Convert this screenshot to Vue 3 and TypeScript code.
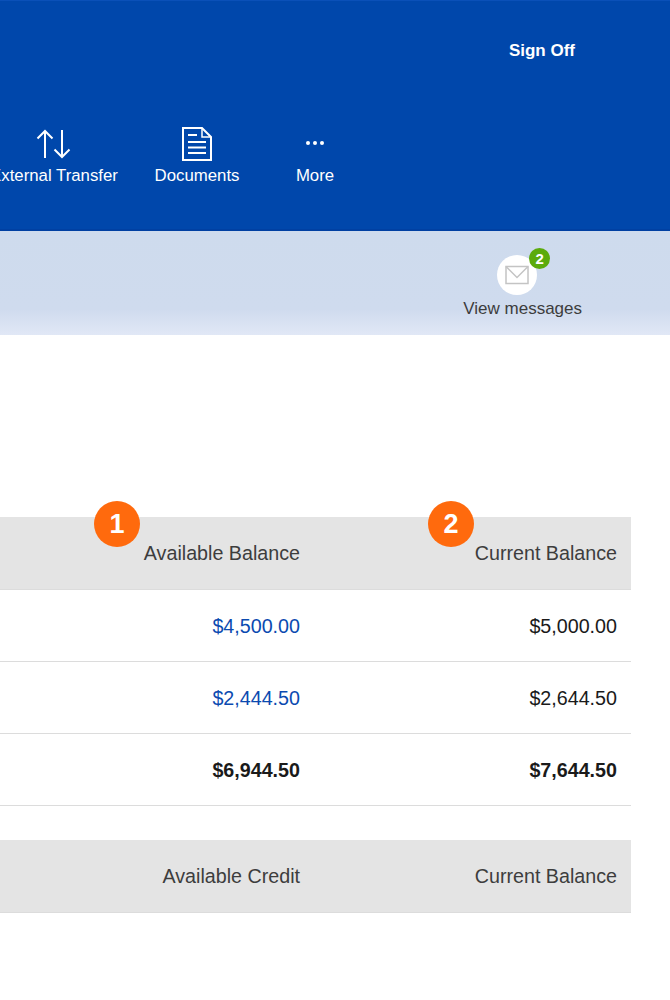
<script setup lang="ts">
interface Row { avail: string; current: string; kind: 'link' | 'total' }
const rows: Row[] = [
  { avail: '$4,500.00', current: '$5,000.00', kind: 'link' },
  { avail: '$2,444.50', current: '$2,644.50', kind: 'link' },
  { avail: '$6,944.50', current: '$7,644.50', kind: 'total' },
]
</script>

<template>
  <div class="page">
    <header class="top">
      <div class="signoff-row"><a class="signoff">Sign Off</a></div>
      <nav class="nav">
        <div class="nav-item wide">
          <svg class="nav-icon" width="36" height="36" viewBox="0 0 36 36" fill="none" stroke="#fff" stroke-width="2">
            <path d="M9 33V6M1.500 13.500L9 6l7.500 7.500" />
            <path d="M26 5v27M18.500 24.500L26 32l7.500-7.500" />
          </svg>
          <span>External Transfer</span>
        </div>
        <div class="nav-item">
          <svg class="nav-icon" width="32" height="36" viewBox="0 0 32 36" fill="none" stroke="#fff" stroke-width="2">
            <path d="M2 3h19l9 9v23H2z" />
            <path d="M21 4v8h8" stroke-width="1.500" />
            <path d="M7 10h9M7 17h18M7 22.500h18M7 28h18" />
          </svg>
          <span>Documents</span>
        </div>
        <div class="nav-item">
          <svg class="nav-icon" width="32" height="36" viewBox="0 0 32 36" fill="#fff">
            <circle cx="9" cy="18" r="2" /><circle cx="16" cy="18" r="2" /><circle cx="23" cy="18" r="2" />
          </svg>
          <span>More</span>
        </div>
      </nav>
    </header>

    <section class="band">
      <div class="messages">
        <div class="msg-circle">
          <svg width="24" height="20" viewBox="0 0 24 20" fill="none" stroke="#c4c4c4" stroke-width="1.500">
            <rect x="1" y="1.500" width="22" height="17" />
            <path d="M1 1.500l11 11 11-11" />
          </svg>
          <span class="msg-badge">2</span>
        </div>
        <span class="msg-label">View messages</span>
      </div>
    </section>

    <main class="content">
      <div class="row head">
        <div class="cell">
          <span class="marker first">1</span>
          Available Balance
        </div>
        <div class="cell">
          <span class="marker second">2</span>
          Current Balance
        </div>
      </div>
      <div v-for="r in rows" :key="r.avail" class="row" :class="r.kind">
        <div class="cell avail">{{ r.avail }}</div>
        <div class="cell">{{ r.current }}</div>
      </div>
      <div class="row head second-table">
        <div class="cell">Available Credit</div>
        <div class="cell">Current Balance</div>
      </div>
    </main>
  </div>
</template>

<style>
html, body { margin: 0; background: #fff; overflow: hidden; }
</style>

<style scoped>
.page {
  width: 670px;
  height: 1000px;
  overflow: hidden;
  font-family: "Liberation Sans", Arial, sans-serif;
  background: #fff;
}
.top {
  height: 231px;
  box-sizing: border-box;
  background: #0047ab;
  border-top: 1px solid #0a50b8;
  border-bottom: 2px solid #0040a2;
  display: flex;
  flex-direction: column;
  color: #fff;
}
.signoff-row {
  display: flex;
  justify-content: flex-end;
  padding: 41px 95px 0 0;
}
.signoff {
  font-size: 17px;
  line-height: 18px;
  font-weight: 700;
}
.nav {
  display: flex;
  justify-content: flex-end;
  padding: 0 296px 0 0;
  margin-top: 65px;
}
.nav-item {
  width: 118px;
  flex: none;
  display: flex;
  flex-direction: column;
  align-items: center;
  font-size: 16.800px;
  line-height: 18px;
  white-space: nowrap;
}
.nav-item.wide { width: 168px; }
.nav-icon { height: 36px; margin-bottom: 6px; }
.band {
  height: 104px;
  box-sizing: border-box;
  background: linear-gradient(to bottom, #cedbed 0%, #cfdbee 75%, #e1e8f6 100%);
  display: flex;
  justify-content: flex-end;
  padding: 24px 88px 0 0;
}
.messages {
  display: flex;
  flex-direction: column;
  align-items: center;
  gap: 5px;
}
.msg-circle {
  position: relative;
  width: 40px;
  height: 40px;
  margin-right: 11px;
  border-radius: 50%;
  background: #fff;
  display: flex;
  align-items: center;
  justify-content: center;
}
.msg-badge {
  position: absolute;
  top: -7px;
  right: -13px;
  width: 21px;
  height: 21px;
  border-radius: 50%;
  background: #5bab0c;
  color: #fff;
  font-size: 15px;
  line-height: 21px;
  font-weight: 700;
  text-align: center;
}
.msg-label {
  font-size: 17px;
  line-height: 18px;
  color: #3d3d3d;
}
.content {
  width: 631px;
  padding-top: 182px;
}
.row {
  display: grid;
  grid-template-columns: 314px 317px;
  height: 72px;
  box-sizing: border-box;
  border-bottom: 1px solid #dcdcdc;
  font-size: 19.700px;
  color: #1a1a1a;
}
.row.head {
  height: 73px;
  background: #e4e4e4;
  color: #3d3d3d;
}
.second-table { margin-top: 34px; }
.cell {
  position: relative;
  display: flex;
  align-items: center;
  justify-content: flex-end;
  padding: 1px 14px 0 0;
  white-space: nowrap;
}
.link .avail { color: #0b4ab0; }
.total { font-weight: 700; }
.marker {
  position: absolute;
  top: -16px;
  width: 46px;
  height: 46px;
  border-radius: 50%;
  background: #ff6a0d;
  color: #fff;
  font-size: 27px;
  line-height: 46px;
  font-weight: 700;
  text-align: center;
}
.marker.first { left: 94px; }
.marker.second { left: 114px; }
</style>
